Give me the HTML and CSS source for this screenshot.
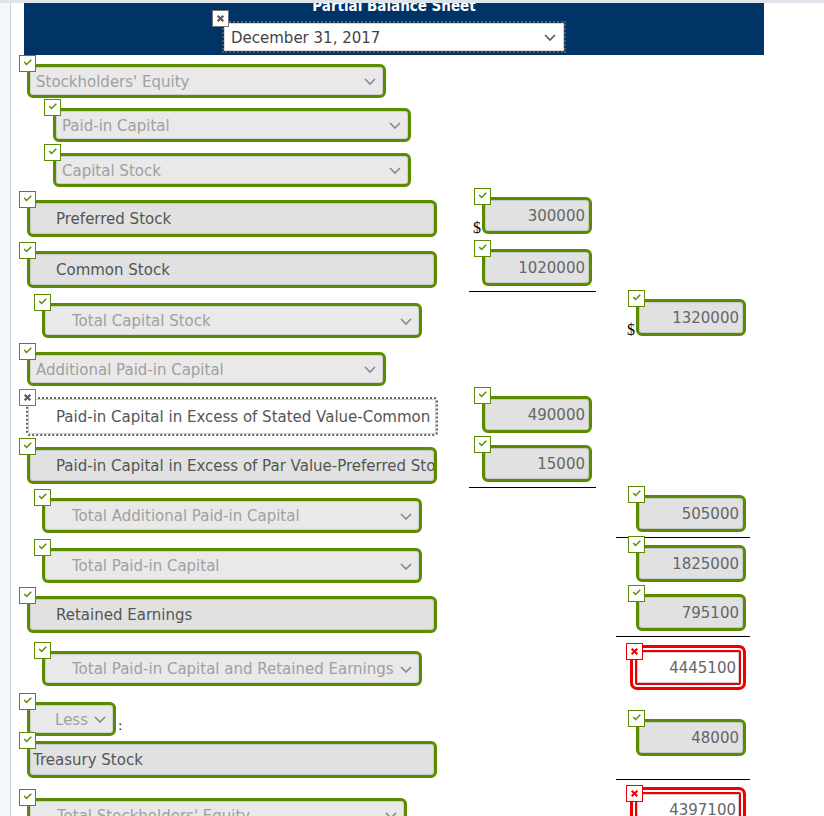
FILE: index.html
```html
<!DOCTYPE html>
<html>
<head>
	<title>Partial Balance Sheet</title>
	<link rel="stylesheet" href="styles.css">
</head>
<body>
<div class="page">
	<div class="rail"></div>
	<div class="main">
		<!-- 表头 -->
		<div class="head">
			<div class="title">Partial Balance Sheet</div>
			<div class="date">
				<span class="chk off"><svg viewBox="0 0 16 16"><path d="M5 5L11 11M11 5L5 11"/></svg></span>
				<span>December 31, 2017</span>
				<svg class="arrow" viewBox="0 0 12 7"><path d="M1 1L6 6L11 1"/></svg>
			</div>
		</div>

		<!-- 表体 -->
		<div class="sheet">
			<div class="c1">
				<div class="sel lv0 t9">
					<span class="chk"><svg viewBox="0 0 16 16"><path d="M4.5 6.5L7 9L12 4"/></svg></span>
					<span class="txt">Stockholders' Equity</span>
					<svg class="arrow" viewBox="0 0 12 7"><path d="M1 1L6 6L11 1"/></svg>
				</div>
			</div>

			<div class="c1">
				<div class="sel sub t9">
					<span class="chk"><svg viewBox="0 0 16 16"><path d="M4.5 6.5L7 9L12 4"/></svg></span>
					<span class="txt">Paid-in Capital</span>
					<svg class="arrow" viewBox="0 0 12 7"><path d="M1 1L6 6L11 1"/></svg>
				</div>
			</div>

			<div class="c1">
				<div class="sel sub t9">
					<span class="chk"><svg viewBox="0 0 16 16"><path d="M4.5 6.5L7 9L12 4"/></svg></span>
					<span class="txt">Capital Stock</span>
					<svg class="arrow" viewBox="0 0 12 7"><path d="M1 1L6 6L11 1"/></svg>
				</div>
			</div>

			<div class="c1">
				<div class="inp acct t12">
					<span class="chk"><svg viewBox="0 0 16 16"><path d="M4.5 6.5L7 9L12 4"/></svg></span>
					<span class="txt">Preferred Stock</span>
				</div>
			</div>
			<div class="c2">
				<div class="num t9">
					<span class="chk"><svg viewBox="0 0 16 16"><path d="M4.5 6.5L7 9L12 4"/></svg></span>
					<span class="cur">$</span>300000
				</div>
			</div>

			<div class="c1">
				<div class="inp acct t11">
					<span class="chk"><svg viewBox="0 0 16 16"><path d="M4.5 6.5L7 9L12 4"/></svg></span>
					<span class="txt">Common Stock</span>
				</div>
			</div>
			<div class="c2 line">
				<div class="num t9">
					<span class="chk"><svg viewBox="0 0 16 16"><path d="M4.5 6.5L7 9L12 4"/></svg></span>
					1020000
				</div>
			</div>

			<div class="c1">
				<div class="sel total t11">
					<span class="chk"><svg viewBox="0 0 16 16"><path d="M4.5 6.5L7 9L12 4"/></svg></span>
					<span class="txt">Total Capital Stock</span>
					<svg class="arrow" viewBox="0 0 12 7"><path d="M1 1L6 6L11 1"/></svg>
				</div>
			</div>
			<div class="c4">
				<div class="num t7">
					<span class="chk"><svg viewBox="0 0 16 16"><path d="M4.5 6.5L7 9L12 4"/></svg></span>
					<span class="cur">$</span>1320000
				</div>
			</div>

			<div class="c1">
				<div class="sel lv0 t9">
					<span class="chk"><svg viewBox="0 0 16 16"><path d="M4.5 6.5L7 9L12 4"/></svg></span>
					<span class="txt">Additional Paid-in Capital</span>
					<svg class="arrow" viewBox="0 0 12 7"><path d="M1 1L6 6L11 1"/></svg>
				</div>
			</div>

			<div class="c1">
				<div class="inp acct open t12">
					<span class="chk off"><svg viewBox="0 0 16 16"><path d="M5 5L11 11M11 5L5 11"/></svg></span>
					<span class="txt">Paid-in Capital in Excess of Stated Value-Common Stock</span>
				</div>
			</div>
			<div class="c2">
				<div class="num t9">
					<span class="chk"><svg viewBox="0 0 16 16"><path d="M4.5 6.5L7 9L12 4"/></svg></span>
					490000
				</div>
			</div>

			<div class="c1">
				<div class="inp acct t11">
					<span class="chk"><svg viewBox="0 0 16 16"><path d="M4.5 6.5L7 9L12 4"/></svg></span>
					<span class="txt">Paid-in Capital in Excess of Par Value-Preferred Stock</span>
				</div>
			</div>
			<div class="c2 line">
				<div class="num t9">
					<span class="chk"><svg viewBox="0 0 16 16"><path d="M4.5 6.5L7 9L12 4"/></svg></span>
					15000
				</div>
			</div>

			<div class="c1">
				<div class="sel total t10">
					<span class="chk"><svg viewBox="0 0 16 16"><path d="M4.5 6.5L7 9L12 4"/></svg></span>
					<span class="txt">Total Additional Paid-in Capital</span>
					<svg class="arrow" viewBox="0 0 12 7"><path d="M1 1L6 6L11 1"/></svg>
				</div>
			</div>
			<div class="c4 line">
				<div class="num t7">
					<span class="chk"><svg viewBox="0 0 16 16"><path d="M4.5 6.5L7 9L12 4"/></svg></span>
					505000
				</div>
			</div>

			<div class="c1">
				<div class="sel total t10">
					<span class="chk"><svg viewBox="0 0 16 16"><path d="M4.5 6.5L7 9L12 4"/></svg></span>
					<span class="txt">Total Paid-in Capital</span>
					<svg class="arrow" viewBox="0 0 12 7"><path d="M1 1L6 6L11 1"/></svg>
				</div>
			</div>
			<div class="c4">
				<div class="num t7">
					<span class="chk"><svg viewBox="0 0 16 16"><path d="M4.5 6.5L7 9L12 4"/></svg></span>
					1825000
				</div>
			</div>

			<div class="c1">
				<div class="inp acct t11">
					<span class="chk"><svg viewBox="0 0 16 16"><path d="M4.5 6.5L7 9L12 4"/></svg></span>
					<span class="txt">Retained Earnings</span>
				</div>
			</div>
			<div class="c4 line">
				<div class="num t9">
					<span class="chk"><svg viewBox="0 0 16 16"><path d="M4.5 6.5L7 9L12 4"/></svg></span>
					795100
				</div>
			</div>

			<div class="c1">
				<div class="sel total t14">
					<span class="chk"><svg viewBox="0 0 16 16"><path d="M4.5 6.5L7 9L12 4"/></svg></span>
					<span class="txt">Total Paid-in Capital and Retained Earnings</span>
					<svg class="arrow" viewBox="0 0 12 7"><path d="M1 1L6 6L11 1"/></svg>
				</div>
			</div>
			<div class="c4">
				<div class="num bad t8">
					<span class="chk no"><svg viewBox="0 0 16 16"><path d="M5 5L11 11M11 5L5 11"/></svg></span>
					4445100
				</div>
			</div>

			<div class="c1">
				<div class="less-line t9">
					<div class="sel less">
						<span class="chk"><svg viewBox="0 0 16 16"><path d="M4.5 6.5L7 9L12 4"/></svg></span>
						<span class="txt">Less</span>
						<svg class="arrow" viewBox="0 0 12 7"><path d="M1 1L6 6L11 1"/></svg>
					</div>
					<span class="colon">:</span>
				</div>
				<div class="inp plain">
					<span class="chk"><svg viewBox="0 0 16 16"><path d="M4.5 6.5L7 9L12 4"/></svg></span>
					<span class="txt">Treasury Stock</span>
				</div>
			</div>
			<div class="c4 line">
				<div class="num t26">
					<span class="chk"><svg viewBox="0 0 16 16"><path d="M4.5 6.5L7 9L12 4"/></svg></span>
					48000
				</div>
			</div>

			<div class="c1">
				<div class="sel grand t18">
					<span class="chk"><svg viewBox="0 0 16 16"><path d="M4.5 6.5L7 9L12 4"/></svg></span>
					<span class="txt">Total Stockholders' Equity</span>
					<svg class="arrow" viewBox="0 0 12 7"><path d="M1 1L6 6L11 1"/></svg>
				</div>
			</div>
			<div class="c4">
				<div class="num bad t7">
					<span class="chk no"><svg viewBox="0 0 16 16"><path d="M5 5L11 11M11 5L5 11"/></svg></span>
					4397100
				</div>
			</div>
		</div>
	</div>
</div>
</body>
</html>
```

FILE: styles.css
```css
*{
	margin:0;
	padding:0;
	box-sizing:border-box;
}
body{
	font-family:"DejaVu Sans",Verdana,sans-serif;
	font-size:15px;
	background:#fff;
	color:#333;
	overflow:hidden;
}
.page{
	display:flex;
	min-height:100vh;
	border-top:3px solid #dfe4ea;
}
.rail{
	flex:none;
	width:11px;
	background:#f4f7fa;
	border-right:1px solid #c9d1dc;
}
.main{
	flex:1;
}

/* 表头 */
.head{
	margin-left:13px;
	width:740px;
	height:52px;
	background:#003366;
	overflow:hidden;
	display:flex;
	flex-direction:column;
	align-items:center;
}
.title{
	color:#fff;
	font-family:"DejaVu Sans Condensed","DejaVu Sans",sans-serif;
	font-weight:bold;
	font-size:15px;
	line-height:16px;
	margin-top:-5px;
}
.date{
	position:relative;
	margin-top:9px;
	width:340px;
	height:28px;
	background:#fff;
	border:1px solid #d8d8d8;
	outline:2px dotted #5a5a5a;
	display:flex;
	align-items:center;
	justify-content:space-between;
	padding:1px 7px 0 6px;
	color:#444;
}
.date .chk{
	left:-13px;
	top:-14px;
}
.date .arrow{
	stroke:#555;
}

/* 表体 */
.sheet{
	display:grid;
	grid-template-columns:458px 127px 20px 134px;
	grid-template-rows:44px 45px 44px 52px 52px 51px 44px 49px 52px 50px 47px 52px 56px 87px 60px;
}
.c1{grid-column:1;}
.c2{grid-column:2;}
.c4{grid-column:4;}
.line{
	border-bottom:1px solid #000;
}

.t7{margin-top:7px;}
.t8{margin-top:8px;}
.t9{margin-top:9px;}
.t10{margin-top:10px;}
.t11{margin-top:11px;}
.t12{margin-top:12px;}
.t14{margin-top:14px;}
.t18{margin-top:18px;}
.t26{margin-top:26px;}

/* 勾选框 */
.chk{
	position:absolute;
	left:-11px;
	top:-12px;
	width:17px;
	height:17px;
	background:#fff;
	border:1px solid #5b8c00;
	z-index:2;
}
.chk svg{
	display:block;
	width:15px;
	height:15px;
	fill:none;
	stroke:#5b8c00;
	stroke-width:1.6;
}
.chk.off{
	border-color:#777;
}
.chk.off svg{
	stroke:#555;
	stroke-width:2.2;
}
.chk.no{
	border-color:#e00;
	left:-7px;
	top:-5px;
}
.chk.no svg{
	stroke:#e00;
	stroke-width:2.2;
}

.arrow{
	flex:none;
	width:12px;
	height:7px;
	fill:none;
	stroke:#888;
	stroke-width:1.6;
}

/* 下拉框 */
.sel{
	position:relative;
	height:34px;
	background:#e9e9e9;
	border:3px solid #5b8c00;
	border-radius:6px;
	box-shadow:inset 0 0 0 1px #cfcfcf;
	display:flex;
	align-items:center;
	justify-content:space-between;
	padding:1px 7px 0 6px;
	color:#a0a0a0;
}
.sel .txt{
	white-space:nowrap;
	overflow:hidden;
}
.lv0{
	width:359px;
	margin-left:16px;
}
.sub{
	width:358px;
	margin-left:42px;
}
.sub .chk{
	left:-12px;
}
.total{
	width:380px;
	height:35px;
	margin-left:31px;
	padding-left:27px;
}
.grand{
	width:380px;
	margin-left:16px;
	padding-left:27px;
}
.less-line{
	display:flex;
	align-items:flex-end;
	margin-left:16px;
}
.less{
	width:89px;
	justify-content:flex-end;
	gap:6px;
	padding-right:7px;
}
.colon{
	color:#000;
	font-size:13px;
	line-height:14px;
	margin:0 0 3px 2px;
}

/* 输入框 */
.inp{
	position:relative;
	width:410px;
	height:37px;
	margin-left:16px;
	background:#e1e1e1;
	border:3px solid #5b8c00;
	border-radius:6px;
	box-shadow:inset 0 0 0 1px #c8c8c8;
	display:flex;
	align-items:center;
	padding:1px 0 0 26px;
	color:#555;
}
.inp .txt{
	white-space:nowrap;
	overflow:hidden;
}
.inp.open{
	width:408px;
	height:35px;
	margin-left:17px;
	background:#fff;
	border:1px solid #d0d0d0;
	border-radius:2px;
	outline:2px dotted #666;
	box-shadow:none;
	padding-left:27px;
}
.inp.open .chk{
	left:-10px;
	top:-11px;
}
.plain{
	margin-top:5px;
	padding-left:3px;
}

/* 金额框 */
.num{
	position:relative;
	width:110px;
	height:37px;
	background:#e1e1e1;
	border:3px solid #5b8c00;
	border-radius:6px;
	box-shadow:inset 0 0 0 1px #c8c8c8;
	text-align:right;
	padding:1px 4px 0 0;
	line-height:31px;
	color:#666;
}
.c2 .num{
	margin-left:13px;
}
.c4 .num{
	margin-left:20px;
}
.cur{
	position:absolute;
	left:-12px;
	bottom:-5px;
	font-family:"Liberation Serif",serif;
	font-size:16px;
	line-height:16px;
	color:#000;
}
.num.bad{
	width:116px;
	height:45px;
	background:#fff;
	border:3px solid #e00;
	border-radius:7px;
	box-shadow:inset 0 0 0 2px #fff,inset 0 0 0 4px #e00,inset 0 0 0 5px #d0d0d0;
	padding-right:7px;
	line-height:39px;
}
.c4 .num.bad{
	margin-left:14px;
}
```
